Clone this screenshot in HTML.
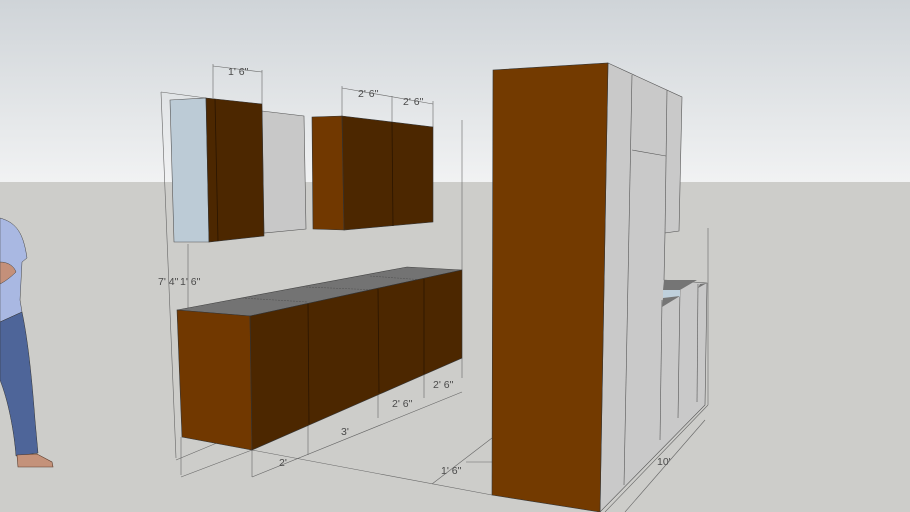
<!DOCTYPE html>
<html><head><meta charset="utf-8"><style>
html,body{margin:0;padding:0;width:910px;height:512px;overflow:hidden;background:#cdcdca}
svg{display:block}
text{font-family:"Liberation Sans",sans-serif;font-size:10.5px;fill:#4a4a4a}
</style></head><body>
<svg width="910" height="512" viewBox="0 0 910 512" xmlns="http://www.w3.org/2000/svg">
<defs><linearGradient id="sky" x1="0" y1="0" x2="0" y2="1">
<stop offset="0" stop-color="#cfd4d8"/><stop offset="1" stop-color="#f1f2f3"/></linearGradient></defs>
<rect x="0" y="0" width="910" height="182" fill="url(#sky)"/>
<rect x="0" y="182" width="910" height="330" fill="#cdcdca"/>
<g stroke="#666" stroke-width="0.6" fill="none">
<!-- dim lines -->
<line x1="161" y1="92" x2="176" y2="458"/>
<line x1="161" y1="92" x2="206" y2="98"/>
<line x1="213" y1="64" x2="213" y2="98"/><line x1="262" y1="70" x2="262" y2="104"/>
<line x1="213" y1="66" x2="262" y2="72"/>
<line x1="342" y1="86" x2="342" y2="116"/><line x1="392" y1="96" x2="392" y2="124"/><line x1="433" y1="101" x2="433" y2="127"/>
<line x1="342" y1="88" x2="433" y2="104"/>
<line x1="462" y1="120" x2="462" y2="270"/>
<line x1="188" y1="244" x2="188" y2="310"/>
<line x1="181" y1="437" x2="181" y2="475"/>
<line x1="176" y1="460" x2="248" y2="430"/>
<line x1="181" y1="477" x2="252" y2="450"/>
<line x1="252" y1="450" x2="252" y2="477"/>
<line x1="252" y1="477" x2="462" y2="392"/>
<line x1="308" y1="420" x2="308" y2="455"/><line x1="378" y1="392" x2="378" y2="418"/><line x1="424" y1="373" x2="424" y2="398"/><line x1="462" y1="358" x2="462" y2="378"/>
<line x1="252" y1="450" x2="492" y2="495"/>
<line x1="432" y1="484" x2="492" y2="438"/>
<line x1="466" y1="462" x2="492" y2="462"/>
<line x1="708" y1="228" x2="708" y2="405"/>
<line x1="605" y1="512" x2="708" y2="405"/>
<line x1="625" y1="512" x2="705" y2="420"/>
</g>
<!-- upper left cabinet -->
<polygon points="170,100 206,98 209,242 174,242" fill="#bccbd6" stroke="#555" stroke-width="0.6"/>
<polygon points="262,111 304,116 306,229 264,233" fill="#c8c8c8" stroke="#555" stroke-width="0.6"/>
<polygon points="206,98 262,104 264,236 209,242" fill="#4c2700" stroke="#333" stroke-width="0.6"/>
<line x1="215" y1="99" x2="218" y2="241" stroke="#2a1500" stroke-width="0.8"/>
<!-- upper right cabinet -->
<polygon points="312,117 342,116 344,230 313,229" fill="#713800" stroke="#333" stroke-width="0.6"/>
<polygon points="342,116 433,127 433,222 344,230" fill="#4c2700" stroke="#333" stroke-width="0.6"/>
<line x1="392" y1="122" x2="393" y2="226" stroke="#2a1500" stroke-width="0.8"/>
<!-- base cabinet -->
<polygon points="177,310 407,267 462,270 250,316" fill="#737373" stroke="#444" stroke-width="0.6"/>
<g stroke="#555" stroke-width="0.6" stroke-dasharray="2,1"><line x1="242" y1="298" x2="308" y2="302"/><line x1="306" y1="287" x2="378" y2="290"/><line x1="370" y1="276" x2="424" y2="280"/></g>
<polygon points="177,310 250,316 252,450 182,437" fill="#713800" stroke="#333" stroke-width="0.6"/>
<polygon points="250,316 462,270 462,358 252,450" fill="#4c2700" stroke="#333" stroke-width="0.6"/>
<g stroke="#2a1500" stroke-width="0.8"><line x1="308" y1="304" x2="309" y2="424"/><line x1="378" y1="289" x2="379" y2="393"/><line x1="424" y1="279" x2="424" y2="374"/></g>
<!-- tall unit -->
<polygon points="608,63 682,97 679,231 665,233 664,280 707,283 705,405 600,512" fill="#c9c9c9" stroke="#555" stroke-width="0.6"/>
<g stroke="#555" stroke-width="0.6" fill="none">
<line x1="632" y1="75" x2="624" y2="485"/><line x1="667" y1="90" x2="665" y2="233"/>
<line x1="632" y1="150" x2="666" y2="156"/>
<line x1="662" y1="300" x2="660" y2="440"/><line x1="680" y1="290" x2="678" y2="418"/><line x1="698" y1="284" x2="697" y2="402"/>
</g>
<polygon points="664,280 697,280 680,290 663,290" fill="#757575"/>
<polygon points="663,290 680,290 680,297 663,298" fill="#bfd0dc"/>
<polygon points="663,298 680,296 662,307" fill="#757575"/>
<polygon points="700,284 707,283 698,288" fill="#757575"/>
<polygon points="493,70 608,63 600,512 492,495" fill="#733a00" stroke="#333" stroke-width="0.6"/>
<!-- person -->
<path d="M0,218 C14,222 22,230 26,252 L27,258 L22,262 L20,300 L22,312 L0,322 Z" fill="#a9b8e2" stroke="#444" stroke-width="0.5"/>
<path d="M0,262 C8,262 14,266 16,272 C10,278 4,282 0,284 Z" fill="#c4907a" stroke="#444" stroke-width="0.5"/>
<path d="M0,322 L22,312 C28,340 32,380 35,420 L38,453 L16,456 C14,430 8,400 0,380 Z" fill="#4e6599" stroke="#333" stroke-width="0.5"/>
<path d="M17,455 L37,454 L52,462 L53,467 L18,467 Z" fill="#c4927a" stroke="#5a3a2a" stroke-width="0.6"/>
<!-- labels -->
<text x="228" y="75">1' 6"</text>
<text x="358" y="97">2' 6"</text>
<text x="403" y="105">2' 6"</text>
<text x="158" y="285">7' 4"</text>
<text x="180" y="285">1' 6"</text>
<text x="433" y="388">2' 6"</text>
<text x="392" y="407">2' 6"</text>
<text x="341" y="435">3'</text>
<text x="279" y="466">2'</text>
<text x="441" y="474">1' 6"</text>
<text x="657" y="465">10'</text>
</svg>
</body></html>
